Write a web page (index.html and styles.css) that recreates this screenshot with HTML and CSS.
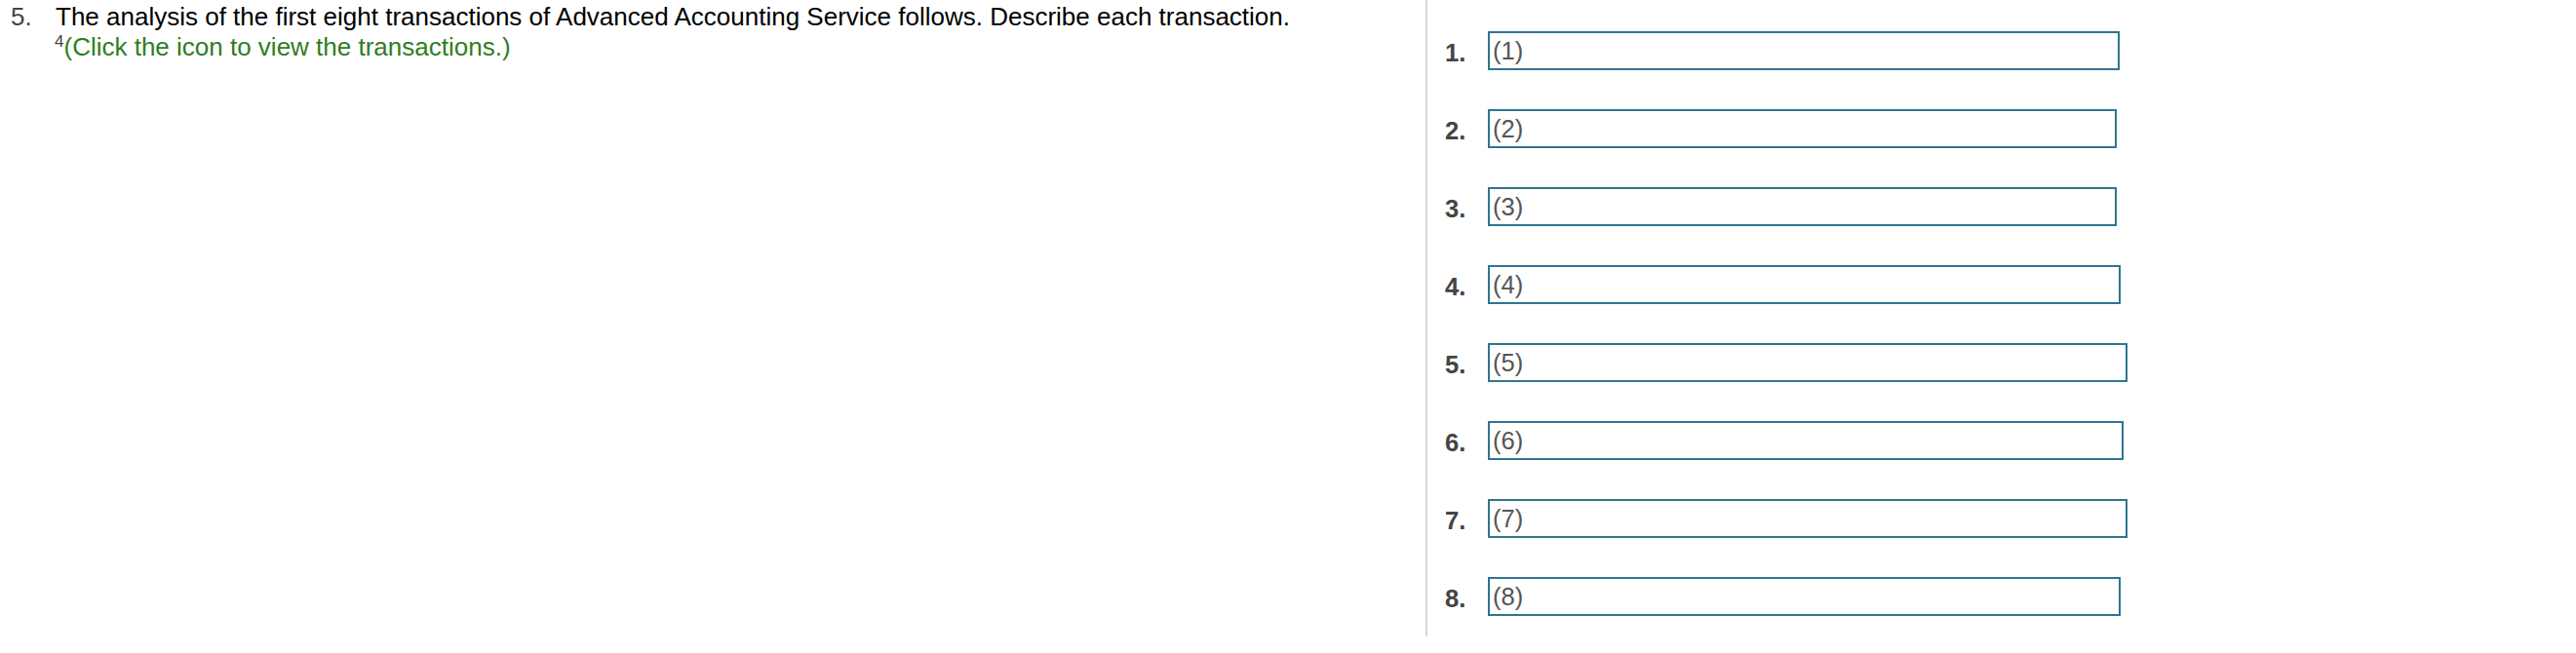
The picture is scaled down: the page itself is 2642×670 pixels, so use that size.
FILE: index.html
```html
<!DOCTYPE html>
<html lang="en">
<head>
<meta charset="utf-8">
<title>Question 5</title>
<link rel="stylesheet" href="styles.css">
</head>
<body>
<div class="page">
  <div class="question">
    <span class="qnum">5.</span>
    <div class="qbody">
      <div class="qtext">The analysis of the first eight transactions of Advanced Accounting Service follows. Describe each transaction.</div>
      <div class="qlink"><sup class="ref">4</sup><span class="link">(Click the icon to view the transactions.)</span></div>
    </div>
  </div>
  <div class="answers">
    <div class="row"><span class="label">1.</span><div class="box" style="width:648px">(1)</div></div>
    <div class="row"><span class="label">2.</span><div class="box" style="width:645px">(2)</div></div>
    <div class="row"><span class="label">3.</span><div class="box" style="width:645px">(3)</div></div>
    <div class="row"><span class="label">4.</span><div class="box" style="width:649px">(4)</div></div>
    <div class="row"><span class="label">5.</span><div class="box" style="width:656px">(5)</div></div>
    <div class="row"><span class="label">6.</span><div class="box" style="width:652px">(6)</div></div>
    <div class="row"><span class="label">7.</span><div class="box" style="width:656px">(7)</div></div>
    <div class="row"><span class="label">8.</span><div class="box" style="width:649px">(8)</div></div>
  </div>
</div>
</body>
</html>
```
FILE: styles.css
```css
html, body {
  margin: 0;
  padding: 0;
  background: #ffffff;
}

body {
  font-family: "Liberation Sans", Arial, Helvetica, sans-serif;
  color: #000;
}

.page {
  display: flex;
  align-items: flex-start;
}

.question {
  flex: 0 0 1462px;
  display: flex;
  align-items: flex-start;
  padding: 2px 0 0 11px;
  box-sizing: border-box;
  font-size: 26px;
  line-height: 31px;
}

.qnum {
  flex: 0 0 46px;
  color: #444;
}

.qbody {
  flex: 1 1 auto;
}

.qtext {
  color: #000;
}

.qlink {
  color: #2f7d1f;
}

.ref {
  font-size: 17px;
  line-height: 0;
  color: #444;
  vertical-align: 9px;
  margin-left: -1px;
}

.link {
  color: #2f7d1f;
}

.answers {
  border-left: 2px solid #d4d7e0;
  padding: 32px 0 21px 18px;
  display: flex;
  flex-direction: column;
  gap: 40px;
}

.row {
  display: flex;
  align-items: flex-start;
}

.label {
  flex: 0 0 44px;
  font-weight: bold;
  font-size: 25.6px;
  line-height: 29px;
  padding-top: 8px;
  color: #444;
}

.box {
  box-sizing: border-box;
  height: 40px;
  border: 2px solid #2f7591;
  padding: 0 5px 0 3px;
  font-size: 25.6px;
  line-height: 36px;
  color: #555;
  background: #fff;
}
```
